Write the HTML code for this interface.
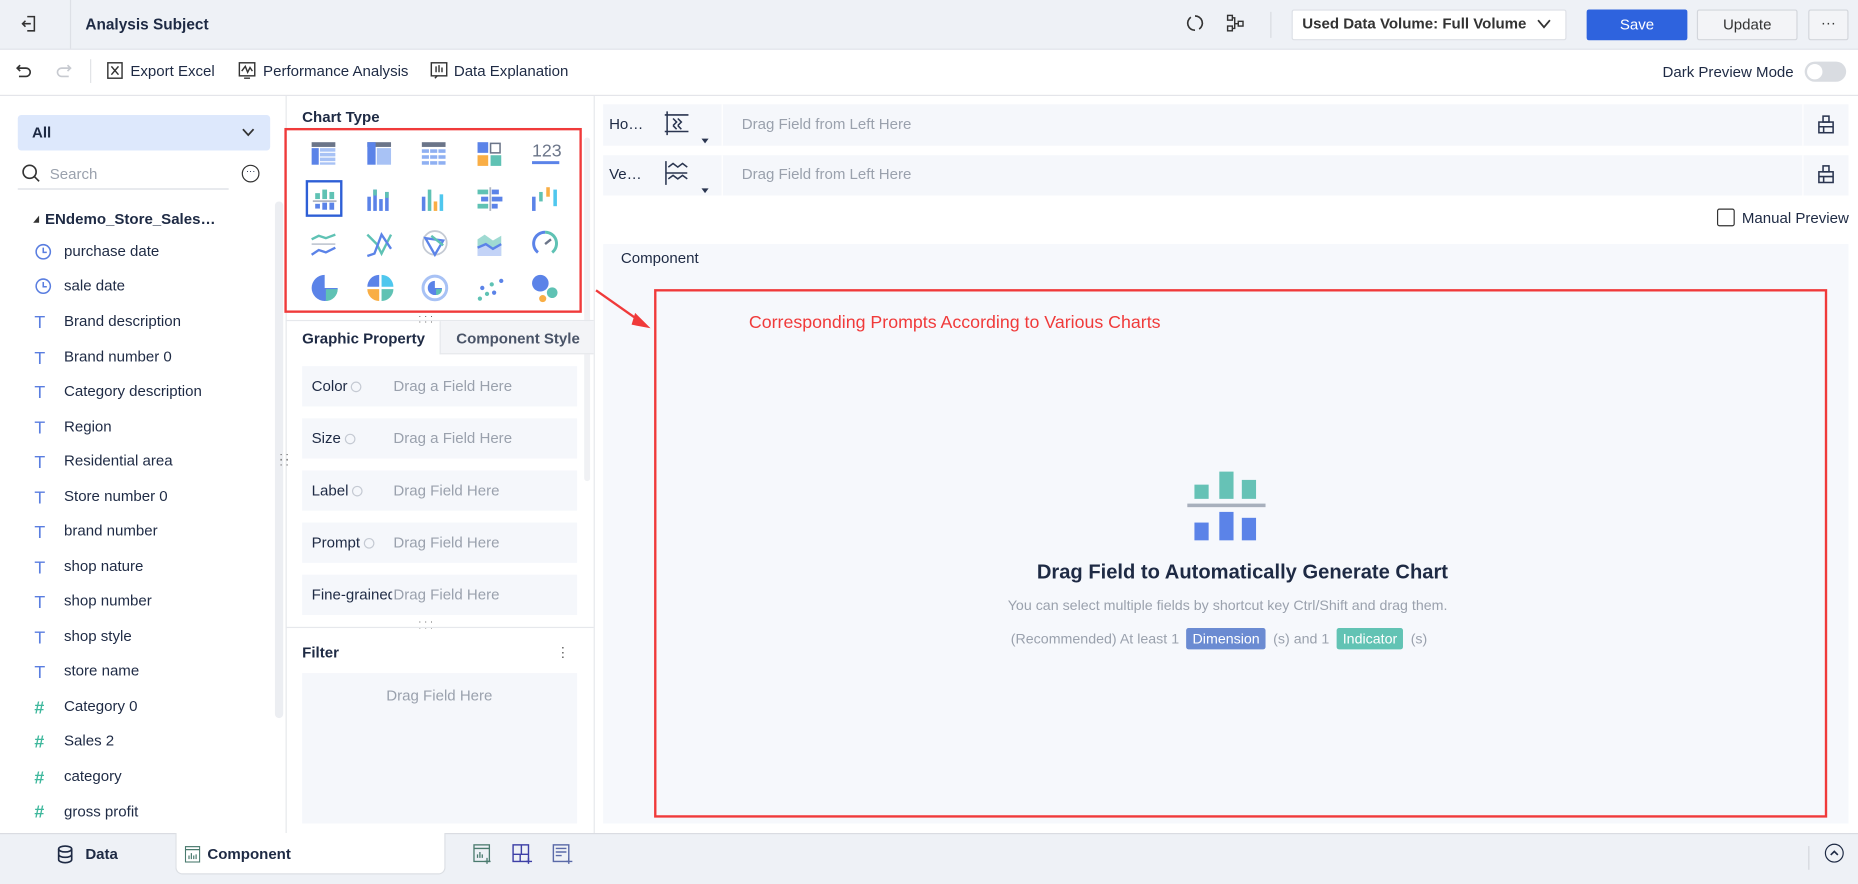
<!DOCTYPE html>
<html><head><meta charset="utf-8">
<style>
*{box-sizing:border-box;margin:0;padding:0}
html,body{width:1858px;height:884px;overflow:hidden;background:#fff}
#w{width:1568px;height:746px;transform:scale(1.18495);transform-origin:0 0;position:relative;font-family:"Liberation Sans",Arial,sans-serif;font-size:12.7px;color:#1e2a44;background:#fff}
.a{position:absolute}
.t{white-space:nowrap}
.gray{color:#9aa1ad}
.fld{position:absolute;left:255px;width:232px;height:34px;background:#f5f7fb}
.fld .l{position:absolute;left:8px;top:10px;white-space:nowrap}
.fld .p{position:absolute;left:77px;top:10px;color:#9aa1ad;white-space:nowrap}
.gear{display:inline-block;width:9px;height:9px;border:1.5px solid #c5cad3;border-radius:50%;margin-left:3px;vertical-align:-1px}
.it{position:absolute;left:54px}
.ic{position:absolute;left:29px;font-size:15px;color:#5a7ee0;margin-top:3px}
.ih{position:absolute;left:29px;font-size:15px;color:#3fb89d;font-weight:bold;margin-top:3px}
</style></head><body><div id="w">
<!-- top bar -->
<div class="a" style="left:0;top:0;width:1568px;height:42px;background:#eef1f6;border-bottom:1px solid #e1e4ea"></div>
<svg class="a" style="left:17px;top:12px" width="16" height="16" viewBox="0 0 16 16" fill="none" stroke="#333" stroke-width="1.3"><path d="M6 2h6v12H6M9 8H2M4.5 5.5L2 8l2.5 2.5"/></svg>
<div class="a" style="left:59px;top:0;width:1px;height:41px;background:#dde0e6"></div>
<div class="a t" style="left:72px;top:13px;font-weight:bold;font-size:13px">Analysis Subject</div>
<svg class="a" style="left:1000px;top:11px" width="17" height="17" viewBox="0 0 17 17" fill="none" stroke="#333" stroke-width="1.4"><path d="M5 3.5A6 6 0 0 0 8.5 14.5M12 13.5A6 6 0 0 0 8.5 2.5"/></svg>
<svg class="a" style="left:1034px;top:11px" width="17" height="17" viewBox="0 0 17 17" fill="none" stroke="#333" stroke-width="1.2"><rect x="2" y="2" width="4" height="4"/><rect x="2" y="11" width="4" height="4"/><rect x="11" y="7" width="4" height="4"/><path d="M6 4h2v9H6M8 9h3"/></svg>
<div class="a" style="left:1072px;top:10px;width:1px;height:22px;background:#d8dbe1"></div>
<div class="a" style="left:1090px;top:8px;width:232px;height:26px;background:#fff;border:1px solid #dde0e6;border-radius:2px"></div>
<div class="a t" style="left:1099px;top:13px;font-weight:bold;color:#333">Used Data Volume: Full Volume</div>
<svg class="a" style="left:1296px;top:13px" width="14" height="14" viewBox="0 0 14 14" fill="none" stroke="#333" stroke-width="1.5"><path d="M2 4l5 6 5-6"/></svg>
<div class="a" style="left:1339px;top:8px;width:85px;height:26px;background:#2e63de;border-radius:2px;color:#fff;text-align:center;line-height:26px">Save</div>
<div class="a" style="left:1432px;top:8px;width:85px;height:26px;background:#f3f4f7;border:1px solid #d3d6dc;border-radius:2px;text-align:center;line-height:24px;color:#333">Update</div>
<div class="a" style="left:1526px;top:8px;width:34px;height:26px;background:#f3f4f7;border:1px solid #d3d6dc;border-radius:2px;text-align:center;line-height:20px;color:#333">···</div>
<!-- toolbar -->
<div class="a" style="left:0;top:80px;width:1568px;height:1px;background:#e3e5ea"></div>
<svg class="a" style="left:13px;top:53px" width="14" height="14" viewBox="0 0 14 14" fill="none" stroke="#333" stroke-width="1.4"><path d="M4 2L1.5 4.5 4 7M1.5 4.5H9a3.5 3.5 0 0 1 0 7H3"/></svg>
<svg class="a" style="left:47px;top:53px" width="14" height="14" viewBox="0 0 14 14" fill="none" stroke="#c7cad0" stroke-width="1.4"><path d="M10 2l2.5 2.5L10 7M12.5 4.5H5a3.5 3.5 0 0 0 0 7h6"/></svg>
<div class="a" style="left:76px;top:50px;width:1px;height:20px;background:#e0e2e6"></div>
<svg class="a" style="left:90px;top:52px" width="14" height="15" viewBox="0 0 14 15" fill="none" stroke="#333" stroke-width="1.2"><rect x="1" y="1" width="12" height="13"/><path d="M4 4l6 7M10 4l-6 7"/></svg>
<div class="a t" style="left:110px;top:53px">Export Excel</div>
<svg class="a" style="left:201px;top:52px" width="15" height="15" viewBox="0 0 15 15" fill="none" stroke="#333" stroke-width="1.2"><rect x="1" y="1" width="13" height="11"/><path d="M3 8l3-4 2 5 2-4 2 3M5 14h5"/></svg>
<div class="a t" style="left:222px;top:53px">Performance Analysis</div>
<svg class="a" style="left:363px;top:52px" width="15" height="15" viewBox="0 0 15 15" fill="none" stroke="#333" stroke-width="1.2"><rect x="1" y="1" width="13" height="11"/><path d="M5 4v5M7.5 3v6M10 5v4M4 14l2-2"/></svg>
<div class="a t" style="left:383px;top:53px">Data Explanation</div>
<div class="a t" style="left:1403px;top:54px">Dark Preview Mode</div>
<div class="a" style="left:1523px;top:52px;width:35px;height:17px;border-radius:9px;background:#d9dce1"></div>
<div class="a" style="left:1525px;top:54px;width:13px;height:13px;border-radius:50%;background:#fff"></div>
<!-- left panel -->
<div class="a" style="left:15px;top:97px;width:213px;height:30px;background:#dde8fc;border-radius:3px"></div>
<div class="a t" style="left:27px;top:105px;font-weight:bold">All</div>
<svg class="a" style="left:203px;top:105px" width="13" height="13" viewBox="0 0 13 13" fill="none" stroke="#333" stroke-width="1.5"><path d="M2 4l4.5 5L11 4"/></svg>
<svg class="a" style="left:18px;top:138px" width="16" height="16" viewBox="0 0 16 16" fill="none" stroke="#333" stroke-width="1.4"><circle cx="7" cy="7" r="5.5"/><path d="M11 11l4 4"/></svg>
<div class="a t gray" style="left:42px;top:140px">Search</div>
<div class="a" style="left:15px;top:159px;width:178px;height:1px;background:#d9dce1"></div>
<div class="a" style="left:204px;top:139px;width:15px;height:15px;border:1.3px solid #333;border-radius:50%;font-size:8px;text-align:center;line-height:9px">···</div>
<div class="a" style="left:232px;top:170px;width:7px;height:436px;background:#eceef2;border-radius:4px"></div>
<div class="a" style="left:241px;top:81px;width:1px;height:623px;background:#e6e8ec"></div>
<div class="a" style="left:28px;top:182px;width:0;height:0;border-left:5px solid transparent;border-bottom:6px solid #333"></div>
<div class="a t" style="left:38px;top:178px;font-weight:bold">ENdemo_Store_Sales…</div>
<svg class="a" style="left:29px;top:205px" width="15" height="15" viewBox="0 0 15 15" fill="none" stroke="#5a7ee0" stroke-width="1.3"><circle cx="7.5" cy="7.5" r="6"/><path d="M7.5 4v4h3"/></svg>
<div class="it t" style="top:205px">purchase date</div>
<svg class="a" style="left:29px;top:234px" width="15" height="15" viewBox="0 0 15 15" fill="none" stroke="#5a7ee0" stroke-width="1.3"><circle cx="7.5" cy="7.5" r="6"/><path d="M7.5 4v4h3"/></svg>
<div class="it t" style="top:234px">sale date</div>
<div class="ic t" style="top:261px">T</div><div class="it t" style="top:264px">Brand description</div>
<div class="ic t" style="top:291px">T</div><div class="it t" style="top:294px">Brand number 0</div>
<div class="ic t" style="top:320px">T</div><div class="it t" style="top:323px">Category description</div>
<div class="ic t" style="top:350px">T</div><div class="it t" style="top:353px">Region</div>
<div class="ic t" style="top:379px">T</div><div class="it t" style="top:382px">Residential area</div>
<div class="ic t" style="top:409px">T</div><div class="it t" style="top:412px">Store number 0</div>
<div class="ic t" style="top:438px">T</div><div class="it t" style="top:441px">brand number</div>
<div class="ic t" style="top:468px">T</div><div class="it t" style="top:471px">shop nature</div>
<div class="ic t" style="top:497px">T</div><div class="it t" style="top:500px">shop number</div>
<div class="ic t" style="top:527px">T</div><div class="it t" style="top:530px">shop style</div>
<div class="ic t" style="top:556px">T</div><div class="it t" style="top:559px">store name</div>
<div class="ih t" style="top:586px">#</div><div class="it t" style="top:589px">Category 0</div>
<div class="ih t" style="top:615px">#</div><div class="it t" style="top:618px">Sales 2</div>
<div class="ih t" style="top:645px">#</div><div class="it t" style="top:648px">category</div>
<div class="ih t" style="top:674px">#</div><div class="it t" style="top:678px">gross profit</div>
<div class="a" style="left:236px;top:383px;font-size:9px;line-height:5px;color:#555">: :<br>: :</div>
<!-- middle panel -->
<div class="a" style="left:501px;top:81px;width:1px;height:623px;background:#e6e8ec"></div>
<div class="a t" style="left:255px;top:92px;font-weight:bold">Chart Type</div>
<div class="a" style="left:240px;top:108px;width:251px;height:156px;border:2px solid #f03a3a"></div>
<div class="a" style="left:493px;top:116px;width:5px;height:290px;background:#f0f1f4;border-radius:3px"></div>
<svg class="a" style="left:250px;top:112px" width="230" height="150" viewBox="0 0 230 150">
 <g transform="translate(13,8)"><rect x="0" y="0" width="20" height="4" fill="#6b7589"/><rect x="0" y="5" width="6" height="14" fill="#5b83e8"/><rect x="7" y="5" width="13" height="3" fill="#a8c2f5"/><rect x="7" y="9" width="13" height="3" fill="#a8c2f5"/><rect x="7" y="13" width="13" height="3" fill="#a8c2f5"/><rect x="7" y="17" width="13" height="2" fill="#a8c2f5"/></g>
 <g transform="translate(60,8)"><rect x="0" y="0" width="20" height="4" fill="#6b7589"/><rect x="0" y="0" width="7" height="19" fill="#5b83e8"/><rect x="8" y="5" width="12" height="14" fill="#a8c2f5"/></g>
 <g transform="translate(106,8)"><rect x="0" y="0" width="20" height="4" fill="#6b7589"/><g fill="#8fb0f2"><rect x="0" y="6" width="6" height="3"/><rect x="7" y="6" width="6" height="3"/><rect x="14" y="6" width="6" height="3"/><rect x="0" y="11" width="6" height="3"/><rect x="7" y="11" width="6" height="3"/><rect x="14" y="11" width="6" height="3"/><rect x="0" y="16" width="6" height="3"/><rect x="7" y="16" width="6" height="3"/><rect x="14" y="16" width="6" height="3"/></g></g>
 <g transform="translate(153,8)"><rect x="0" y="0" width="9" height="9" fill="#5b83e8"/><rect x="11" y="1" width="8" height="8" fill="none" stroke="#6b7589" stroke-width="1.3"/><rect x="0" y="11" width="9" height="9" fill="#f9ae45"/><rect x="11" y="11" width="9" height="9" fill="#5fc2b4"/></g>
 <g transform="translate(199,6)"><text x="0" y="14" font-family="Liberation Sans" font-size="15" fill="#6b7589">123</text><rect x="0" y="18" width="23" height="2.5" fill="#5b83e8"/></g>
 <rect x="9" y="41" width="29" height="29" fill="none" stroke="#2e5fd6" stroke-width="2"/>
 <g transform="translate(14,46)"><rect x="2" y="5" width="4" height="5" fill="#5fc2b4"/><rect x="8" y="2" width="4" height="8" fill="#5fc2b4"/><rect x="14" y="4" width="4" height="6" fill="#5fc2b4"/><rect x="0" y="11" width="20" height="1.5" fill="#b0b6c2"/><rect x="2" y="14" width="4" height="4" fill="#5b83e8"/><rect x="8" y="13" width="4" height="6" fill="#5b83e8"/><rect x="14" y="13" width="4" height="6" fill="#5b83e8"/></g>
 <g transform="translate(60,46)"><rect x="0" y="8" width="3" height="12" fill="#5b83e8"/><rect x="5" y="2" width="3" height="18" fill="#5b83e8"/><rect x="5" y="2" width="3" height="5" fill="#5fc2b4"/><rect x="10" y="10" width="3" height="10" fill="#5b83e8"/><rect x="15" y="4" width="3" height="16" fill="#5b83e8"/><rect x="15" y="4" width="3" height="5" fill="#5fc2b4"/></g>
 <g transform="translate(106,46)"><rect x="0" y="8" width="3" height="12" fill="#5b83e8"/><rect x="5" y="2" width="3" height="18" fill="#5fc2b4"/><rect x="10" y="12" width="3" height="8" fill="#f9ae45"/><rect x="15" y="6" width="3" height="14" fill="#4fc7ee"/></g>
 <g transform="translate(153,46)"><rect x="10" y="0" width="1.5" height="20" fill="#b0b6c2"/><rect x="0" y="2" width="9" height="4" fill="#5fc2b4"/><rect x="12" y="2" width="6" height="4" fill="#5b83e8"/><rect x="3" y="8" width="6" height="4" fill="#5b83e8"/><rect x="12" y="8" width="9" height="4" fill="#5b83e8"/><rect x="0" y="14" width="9" height="4" fill="#5fc2b4"/><rect x="12" y="14" width="5" height="4" fill="#5b83e8"/></g>
 <g transform="translate(199,46)"><rect x="0" y="8" width="3" height="12" fill="#5b83e8"/><rect x="6" y="4" width="3" height="8" fill="#5fc2b4"/><rect x="12" y="0" width="3" height="8" fill="#f9ae45"/><rect x="18" y="2" width="3" height="14" fill="#4fc7ee"/></g>
 <g transform="translate(13,84)" fill="none" stroke-width="2"><path d="M0 6l6-3 6 2 8-3" stroke="#5fc2b4"/><path d="M0 10h20" stroke="#c4cad4" stroke-width="1.5"/><path d="M0 19l6-4 6 2 8-4" stroke="#5b83e8"/></g>
 <g transform="translate(60,84)" fill="none" stroke-width="2"><path d="M0 2l8 8 4 8 8-16" stroke="#5fc2b4"/><path d="M0 20l6-2 6-16 8 12" stroke="#5b83e8"/></g>
 <g transform="translate(106,82)" fill="none"><circle cx="11" cy="11" r="10" stroke="#c4cad4" stroke-width="1.5"/><path d="M3 7l15 2-7 12z" stroke="#5b83e8" stroke-width="2"/><path d="M8 5l10 8" stroke="#5fc2b4" stroke-width="2"/></g>
 <g transform="translate(153,84)"><path d="M0 6l6-4 7 5 7-4v17H0z" fill="#5fc2b4" opacity=".6"/><path d="M0 13l7-3 6 4 7-4v10H0z" fill="#c3d3f7"/><path d="M0 13l7-3 6 4 7-4" fill="none" stroke="#5b83e8" stroke-width="2"/></g>
 <g transform="translate(199,82)" fill="none" stroke-width="2.5"><path d="M5 19A9.5 9.5 0 0 1 11 2" stroke="#5b83e8"/><path d="M11 2a9.5 9.5 0 0 1 6 17" stroke="#5fc2b4"/><path d="M11 12l5-4" stroke="#6b7589" stroke-width="2"/></g>
 <g transform="translate(13,120)"><path d="M11 11V0a11 11 0 1 0 11 11z" fill="#5b83e8"/><path d="M12 12h10a10 10 0 0 1-10 10z" fill="#5fc2b4"/></g>
 <g transform="translate(60,120)"><path d="M10 10V0A10 10 0 0 0 0 10z" fill="#5b83e8"/><path d="M12 10V0a10 10 0 0 1 10 10z" fill="#4fc7ee"/><path d="M10 12H0a10 10 0 0 0 10 10z" fill="#f9ae45"/><path d="M12 12h10a10 10 0 0 1-10 10z" fill="#5fc2b4"/></g>
 <g transform="translate(106,120)"><circle cx="11" cy="11" r="10" fill="none" stroke="#a8c2f5" stroke-width="2.5"/><path d="M11 11V5a6 6 0 1 0 6 6z" fill="#5b83e8"/><path d="M12 12h5a5 5 0 0 1-5 5z" fill="#5fc2b4"/></g>
 <g transform="translate(153,120)"><circle cx="2" cy="20" r="1.8" fill="#5fc2b4"/><circle cx="8" cy="16" r="1.8" fill="#5fc2b4"/><circle cx="4" cy="11" r="1.8" fill="#5b83e8"/><circle cx="12" cy="8" r="1.8" fill="#5fc2b4"/><circle cx="14" cy="15" r="1.8" fill="#5b83e8"/><circle cx="20" cy="5" r="1.8" fill="#5b83e8"/></g>
 <g transform="translate(199,120)"><circle cx="7" cy="7" r="7" fill="#5b83e8"/><circle cx="17" cy="15" r="4.5" fill="#5fc2b4"/><circle cx="9" cy="20" r="3" fill="#f9ae45"/></g>
</svg>
<div class="a" style="left:353px;top:264px;font-size:8px;line-height:5px;color:#555">· · ·<br>· · ·</div>
<div class="a" style="left:241px;top:270px;width:260px;height:1px;background:#e6e8ec"></div>
<div class="a" style="left:371px;top:271px;width:130px;height:28px;background:#f3f4f7;border-left:1px solid #e6e8ec;border-bottom:1px solid #e6e8ec"></div>
<div class="a t" style="left:255px;top:279px;font-weight:bold">Graphic Property</div>
<div class="a t" style="left:385px;top:279px;font-weight:bold;color:#4a5468">Component Style</div>
<div class="fld" style="top:309px"><span class="l">Color<span class="gear"></span></span><span class="p">Drag a Field Here</span></div>
<div class="fld" style="top:353px"><span class="l">Size<span class="gear"></span></span><span class="p">Drag a Field Here</span></div>
<div class="fld" style="top:397px"><span class="l">Label<span class="gear"></span></span><span class="p">Drag Field Here</span></div>
<div class="fld" style="top:441px"><span class="l">Prompt<span class="gear"></span></span><span class="p">Drag Field Here</span></div>
<div class="fld" style="top:485px"><span class="l" style="width:68px;overflow:hidden">Fine-grained</span><span class="p">Drag Field Here</span></div>
<div class="a" style="left:353px;top:522px;font-size:8px;line-height:5px;color:#555">· · ·<br>· · ·</div>
<div class="a" style="left:241px;top:529px;width:260px;height:1px;background:#e6e8ec"></div>
<div class="a t" style="left:255px;top:544px;font-weight:bold">Filter</div>
<div class="a" style="left:473px;top:544px;font-size:12px;line-height:4px;color:#555">·<br>·<br>·</div>
<div class="a" style="left:255px;top:568px;width:232px;height:127px;background:#f5f7fb"></div>
<div class="a t gray" style="left:326px;top:580px">Drag Field Here</div>
<!-- right -->
<div class="a" style="left:509px;top:88px;width:1051px;height:35px;background:#f5f7fb"></div>
<div class="a" style="left:509px;top:131px;width:1051px;height:34px;background:#f5f7fb"></div>
<div class="a" style="left:609px;top:88px;width:1px;height:35px;background:#fff"></div>
<div class="a" style="left:609px;top:131px;width:1px;height:34px;background:#fff"></div>
<div class="a" style="left:1521px;top:88px;width:1px;height:35px;background:#fff"></div>
<div class="a" style="left:1521px;top:131px;width:1px;height:34px;background:#fff"></div>
<div class="a t" style="left:514px;top:98px">Ho…</div>
<div class="a t" style="left:514px;top:140px">Ve…</div>
<svg class="a" style="left:560px;top:93px" width="22" height="22" viewBox="0 0 22 22" fill="none" stroke="#2a3550" stroke-width="1.3"><path d="M3 1v20M1 4h20M1 18h20M8 7l3 3-3 3M12 7l3 3-3 3M8 13l3 3M12 13l3 3"/></svg>
<svg class="a" style="left:560px;top:135px" width="22" height="22" viewBox="0 0 22 22" fill="none" stroke="#2a3550" stroke-width="1.3"><path d="M2 1v20M4 6l4-3 4 3 4-3 4 3M2 11h18M4 16l4-3 4 3 4-3 4 3"/></svg>
<div class="a" style="left:592px;top:117px;border-left:3px solid transparent;border-right:3px solid transparent;border-top:4px solid #2a3550"></div>
<div class="a" style="left:592px;top:159px;border-left:3px solid transparent;border-right:3px solid transparent;border-top:4px solid #2a3550"></div>
<div class="a t gray" style="left:626px;top:98px">Drag Field from Left Here</div>
<div class="a t gray" style="left:626px;top:140px">Drag Field from Left Here</div>
<svg class="a" style="left:1534px;top:97px" width="14" height="16" viewBox="0 0 14 16" fill="none" stroke="#2a3550" stroke-width="1.3"><rect x="1" y="6" width="12" height="9"/><rect x="4.5" y="1" width="5" height="5"/><path d="M1 10h12M5 10v5"/></svg>
<svg class="a" style="left:1534px;top:139px" width="14" height="16" viewBox="0 0 14 16" fill="none" stroke="#2a3550" stroke-width="1.3"><rect x="1" y="6" width="12" height="9"/><rect x="4.5" y="1" width="5" height="5"/><path d="M1 10h12M5 10v5"/></svg>
<div class="a" style="left:1449px;top:176px;width:15px;height:15px;border:1.3px solid #333;border-radius:2px;background:#fff"></div>
<div class="a t" style="left:1470px;top:177px">Manual Preview</div>
<div class="a" style="left:509px;top:206px;width:1051px;height:489px;background:#f6f8fc"></div>
<div class="a t" style="left:524px;top:211px">Component</div>
<div class="a" style="left:552px;top:244px;width:990px;height:446px;border:2.5px solid #f03a3a"></div>
<svg class="a" style="left:500px;top:240px" width="52" height="40" viewBox="0 0 52 40"><path d="M3 5L40 31" stroke="#f03a3a" stroke-width="2"/><path d="M36 24L49 37 33 34z" fill="#f03a3a"/></svg>
<div class="a t" style="left:632px;top:264px;font-size:15px;color:#f03a3a">Corresponding Prompts According to Various Charts</div>
<svg class="a" style="left:1000px;top:396px" width="72" height="62" viewBox="0 0 72 62"><rect x="8" y="13" width="12" height="12" fill="#66c2b6"/><rect x="29" y="2" width="12" height="23" fill="#66c2b6"/><rect x="48" y="9" width="12" height="16" fill="#66c2b6"/><rect x="2" y="29" width="66" height="3" fill="#a8b0bd"/><rect x="8" y="45" width="12" height="15" fill="#5b83e8"/><rect x="29" y="36" width="12" height="24" fill="#5b83e8"/><rect x="48" y="41" width="12" height="19" fill="#5b83e8"/></svg>
<div class="a t" style="left:875px;top:473px;width:324px;text-align:center;font-size:17px;font-weight:bold;color:#1e2a44">Drag Field to Automatically Generate Chart</div>
<div class="a t" style="left:836px;top:504px;width:400px;text-align:center;font-size:12px;color:#9aa1ad">You can select multiple fields by shortcut key Ctrl/Shift and drag them.</div>
<div class="a t" style="left:853px;top:530px;font-size:12px;color:#9aa1ad">(Recommended) At least 1 <span style="display:inline-block;background:#6b8bd2;color:#fff;padding:2px 5px;border-radius:2px;margin:0 3px">Dimension</span> (s) and 1 <span style="display:inline-block;background:#62c3b4;color:#fff;padding:2px 5px;border-radius:2px;margin:0 3px">Indicator</span> (s)</div>
<!-- bottom -->
<div class="a" style="left:0;top:703px;width:1568px;height:43px;background:#eef1f6;border-top:1px solid #d9dce2"></div>
<div class="a" style="left:148px;top:703px;width:228px;height:35px;background:#fff;border:1px solid #dcdfe4;border-top:none;border-radius:0 0 6px 6px"></div>
<svg class="a" style="left:48px;top:713px" width="14" height="16" viewBox="0 0 14 16" fill="none" stroke="#1e2a44" stroke-width="1.4"><ellipse cx="7" cy="3.5" rx="5.5" ry="2.5"/><path d="M1.5 3.5v9c0 1.4 2.5 2.5 5.5 2.5s5.5-1.1 5.5-2.5v-9M1.5 8c0 1.4 2.5 2.5 5.5 2.5s5.5-1.1 5.5-2.5"/></svg>
<div class="a t" style="left:72px;top:714px;font-weight:bold">Data</div>
<svg class="a" style="left:156px;top:714px" width="13" height="14" viewBox="0 0 13 14" fill="none" stroke="#4a7a6e" stroke-width="1"><rect x="0.5" y="0.5" width="12" height="13"/><path d="M0.5 3h12M3.5 11V8M5.5 11V6M7.5 11V8M9.5 11V7"/></svg>
<div class="a t" style="left:175px;top:714px;font-weight:bold">Component</div>
<svg class="a" style="left:399px;top:712px" width="18" height="18" viewBox="0 0 18 18" fill="none" stroke="#4a7a6e" stroke-width="1.1"><rect x="1" y="1" width="13" height="14"/><path d="M1 4h13M4 12V9M6 12V7M8 12V9M12 12v5M10 15h5" /></svg>
<svg class="a" style="left:432px;top:712px" width="18" height="18" viewBox="0 0 18 18" fill="none" stroke="#3d3fa6" stroke-width="1.2"><rect x="1" y="1" width="13" height="14"/><path d="M1 9h13M7 9v6M8 1v8M14 12v5M12 15h5"/></svg>
<svg class="a" style="left:466px;top:712px" width="18" height="18" viewBox="0 0 18 18" fill="none" stroke="#5a6aa8" stroke-width="1.2"><rect x="1" y="1" width="13" height="14"/><path d="M3 4h9M3 7h9M3 10h5M14 12v5M12 15h5"/></svg>
<div class="a" style="left:1526px;top:714px;width:1px;height:20px;background:#d3d6dc"></div>
<div class="a" style="left:1540px;top:712px;width:16px;height:16px;border:1.4px solid #1e2a44;border-radius:50%"></div>
<svg class="a" style="left:1543px;top:715px" width="10" height="10" viewBox="0 0 10 10" fill="none" stroke="#1e2a44" stroke-width="1.4"><path d="M2 6.5l3-3 3 3"/></svg>
</div></body></html>
